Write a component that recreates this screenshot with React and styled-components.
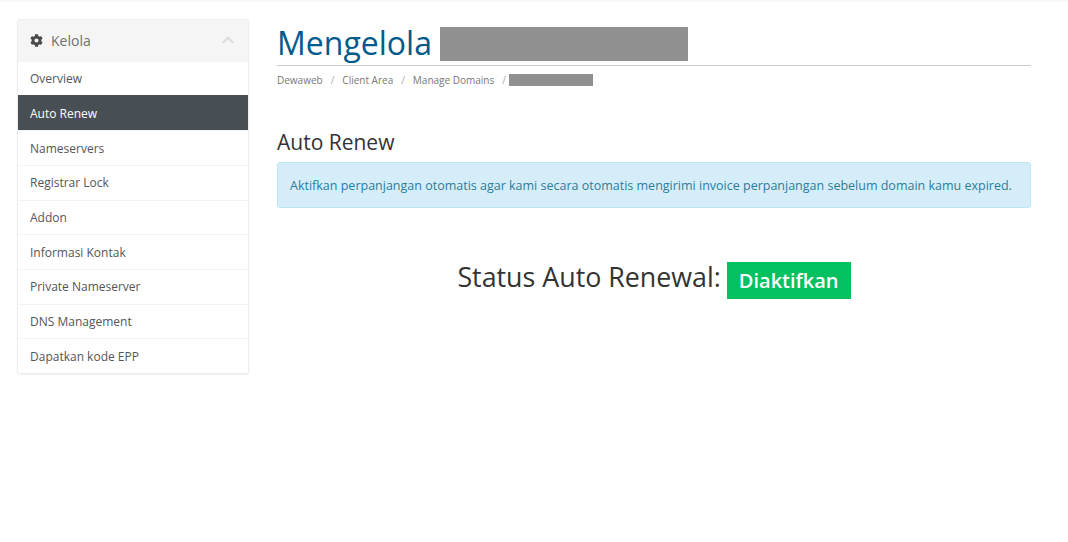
import React from 'react'
import styled, { createGlobalStyle } from 'styled-components'
import { FaCog, FaChevronUp } from 'react-icons/fa'

const GlobalStyle = createGlobalStyle`
  html, body {
    margin: 0;
    padding: 0;
    background: #fff;
    font-family: "Open Sans", "Liberation Sans", sans-serif;
  }
`

const Page = styled.div`
  width: 1068px;
  height: 542px;
  box-sizing: border-box;
  overflow: hidden;
  border-top: 2px solid #f8f8f8;
  padding: 17px 37px 0 17px;
  display: flex;
  align-items: flex-start;
  gap: 28px;
`

const Sidebar = styled.div`
  width: 232px;
  flex-shrink: 0;
  box-sizing: border-box;
  border: 1px solid #eeeeee;
  border-radius: 3px;
  box-shadow: 0 1px 2px rgba(0, 0, 0, 0.07);
  background: #fff;
  overflow: hidden;
`

const SideHeader = styled.div`
  height: 40.5px;
  background: #f5f5f5;
  display: flex;
  align-items: center;
  padding: 0 13px 0 12px;
  color: #707070;
  font-size: 14px;
  svg.gear {
    color: #4a4a4a;
    font-size: 13px;
    margin-right: 8px;
  }
  svg.arrow {
    color: #dedede;
    font-size: 14px;
    margin-left: auto;
  }
`

const SideItem = styled.div`
  height: ${p => (p.$active ? '35px' : '34.7px')};
  box-sizing: border-box;
  display: flex;
  align-items: center;
  padding: 0 12px;
  font-size: 12px;
  color: ${p => (p.$active ? '#fff' : '#555')};
  background: ${p => (p.$active ? '#474f54' : '#fff')};
  border-top: 1px solid ${p => (p.$active ? '#474f54' : '#f3f3f3')};
`

const Main = styled.div`
  flex: 1;
  min-width: 0;
`

const TitleRow = styled.div`
  height: 47px;
  box-sizing: border-box;
  border-bottom: 1px solid #cccccc;
  display: flex;
  align-items: flex-start;
  gap: 8px;
`

const Title = styled.h1`
  margin: 0;
  font-size: 32px;
  line-height: 47px;
  font-weight: 400;
  color: #005a8c;
`

const Redacted = styled.div`
  background: #909090;
  width: ${p => p.$w}px;
  height: ${p => p.$h}px;
  margin-top: ${p => p.$top || 0}px;
`

const Breadcrumb = styled.div`
  display: flex;
  align-items: center;
  height: 28px;
  font-size: 10px;
  color: #777;
`

const Sep = styled.span`
  color: #aaa;
  margin: 0 ${p => (p.$last ? '3px' : '8px')} 0 8px;
`

const SectionTitle = styled.h3`
  margin: 34px 0 0;
  font-size: 21px;
  line-height: 28px;
  font-weight: 400;
  color: #333;
`

const Alert = styled.div`
  margin-top: 6px;
  height: 46px;
  box-sizing: border-box;
  display: flex;
  align-items: center;
  padding: 0 12px;
  background: #d5edf8;
  border: 1px solid #bce6f3;
  border-radius: 3px;
  color: #2b7d9e;
  font-size: 12.5px;
  white-space: nowrap;
`

const StatusRow = styled.div`
  margin-top: 54px;
  display: flex;
  justify-content: center;
  align-items: center;
  gap: 6px;
  color: #333;
`

const StatusLabel = styled.span`
  font-size: 26.8px;
  line-height: 29px;
  margin-bottom: 8px;
`

const Badge = styled.span`
  background: #04c15f;
  color: #fff;
  font-size: 20px;
  font-weight: 600;
  height: 37px;
  padding: 0 12px;
  display: flex;
  align-items: center;
`

const items = ['Overview', 'Auto Renew', 'Nameservers', 'Registrar Lock', 'Addon', 'Informasi Kontak', 'Private Nameserver', 'DNS Management', 'Dapatkan kode EPP']

export default function App() {
  return (
    <Page>
      <GlobalStyle />
      <Sidebar>
        <SideHeader>
          <FaCog className="gear" />
          Kelola
          <FaChevronUp className="arrow" />
        </SideHeader>
        {items.map(item => (
          <SideItem key={item} $active={item === 'Auto Renew'}>{item}</SideItem>
        ))}
      </Sidebar>
      <Main>
        <TitleRow>
          <Title>Mengelola</Title>
          <Redacted $w={248} $h={34} $top={8} />
        </TitleRow>
        <Breadcrumb>
          Dewaweb<Sep>/</Sep>Client Area<Sep>/</Sep>Manage Domains<Sep $last>/</Sep>
          <Redacted $w={84} $h={12} />
        </Breadcrumb>
        <SectionTitle>Auto Renew</SectionTitle>
        <Alert>Aktifkan perpanjangan otomatis agar kami secara otomatis mengirimi invoice perpanjangan sebelum domain kamu expired.</Alert>
        <StatusRow>
          <StatusLabel>Status Auto Renewal:</StatusLabel>
          <Badge>Diaktifkan</Badge>
        </StatusRow>
      </Main>
    </Page>
  )
}
